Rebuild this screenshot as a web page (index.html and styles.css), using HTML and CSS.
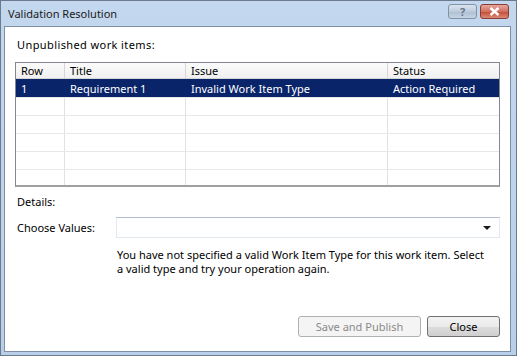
FILE: index.html
```html
<!DOCTYPE html>
<html lang="en">
<head>
    <meta charset="UTF-8">
    <title>Validation Resolution</title>
    <link rel="stylesheet" href="styles.css">
</head>
<body>
    <div class="window">
        <div class="titlebar">
            <span class="title">Validation Resolution</span>
            <div class="caption-buttons">
                <span class="cap-btn help">?</span>
                <span class="cap-btn close">
                    <svg width="11" height="9" viewBox="0 0 11 9"><path d="M1.5 1 L9.5 8 M9.5 1 L1.5 8" stroke="#fff" stroke-width="2.4"/></svg>
                </span>
            </div>
        </div>

        <div class="client">
            <div class="label heading">Unpublished work items:</div>

            <div class="grid">
                <table>
                    <thead>
                        <tr>
                            <th class="col-row">Row</th>
                            <th class="col-title">Title</th>
                            <th class="col-issue">Issue</th>
                            <th>Status</th>
                        </tr>
                    </thead>
                    <tbody>
                        <tr class="selected">
                            <td>1</td>
                            <td>Requirement 1</td>
                            <td>Invalid Work Item Type</td>
                            <td>Action Required</td>
                        </tr>
                        <tr><td></td><td></td><td></td><td></td></tr>
                        <tr><td></td><td></td><td></td><td></td></tr>
                        <tr><td></td><td></td><td></td><td></td></tr>
                        <tr><td></td><td></td><td></td><td></td></tr>
                        <tr><td></td><td></td><td></td><td></td></tr>
                    </tbody>
                </table>
            </div>

            <div class="label details">Details:</div>

            <div class="field-row">
                <label class="field-label">Choose Values:</label>
                <div class="combo"><span class="arrow"></span></div>
            </div>

            <p class="message">You have not specified a valid Work Item Type for this work item. Select a valid type and try your operation again.</p>

            <div class="actions">
                <button class="button" disabled>Save and Publish</button>
                <button class="button close-button">Close</button>
            </div>
        </div>
    </div>
</body>
</html>
```

FILE: styles.css
```css
body {
    margin: 0;
    font-family: "Noto Sans", "Open Sans", sans-serif;
    font-size: 11px;
    color: #000;
}
.window {
    box-sizing: border-box;
    width: 517px;
    height: 356px;
    border: 1px solid #6b7a8c;
    padding: 0 5px 3px 3px;
    background: linear-gradient(#c3d7ee, #b9cfe9);
    display: flex;
    flex-direction: column;
}
.titlebar {
    height: 25px;
    display: flex;
    align-items: flex-start;
    justify-content: space-between;
}
.title {
    margin: 5px 0 0 4px;
    line-height: 16px;
    color: #1a1a1a;
}
.caption-buttons {
    display: flex;
    gap: 3px;
    margin-top: 3px;
    margin-right: 2px;
}
.cap-btn {
    box-sizing: border-box;
    width: 29px;
    height: 15px;
    border: 1px solid #8393a6;
    border-radius: 3px;
    display: flex;
    align-items: center;
    justify-content: center;
}
.cap-btn.help {
    background: linear-gradient(#dbe5f0, #bccbdc 50%, #aebfd3 51%, #c6d4e3);
    color: #66768a;
    font-weight: bold;
    font-size: 11px;
    line-height: 1;
}
.cap-btn.close {
    border-color: #8c3c34;
    background: linear-gradient(#e6a89e, #d0705f 50%, #c44a36 51%, #d98a74);
}
.client {
    flex: 1;
    background: #fff;
    border: 1px solid #7d8fa6;
    padding: 10px 10px 14px 10px;
    display: flex;
    flex-direction: column;
}
.label {
    line-height: 16px;
    padding-left: 2px;
}
.heading {
    letter-spacing: 0.4px;
}
.grid {
    margin-top: 9px;
    height: 122px;
    overflow: hidden;
    border: 1px solid #828790;
    border-bottom: 2px solid #a0a0a0;
}
table {
    width: 100%;
    border-collapse: collapse;
    table-layout: fixed;
}
th, td {
    text-align: left;
    font-weight: normal;
    padding: 0 5px;
    white-space: nowrap;
    border-right: 1px solid #e2e2e2;
}
th:last-child, td:last-child {
    border-right: none;
}
th {
    height: 15px;
    line-height: 15px;
    background: linear-gradient(#fbfbfb, #f0f0f0);
    border-right-color: #d5d5d5;
    border-bottom: 1px solid #d5d5d5;
}
td {
    height: 17px;
    line-height: 17px;
    border-bottom: 1px solid #e8e8e8;
}
.col-row {
    width: 38px;
}
.col-title {
    width: 110px;
}
.col-issue {
    width: 191px;
}
tr.selected td {
    background: #0a246a;
    color: #fff;
    height: 18px;
    border-right-color: #0a246a;
}
.details {
    margin-top: 7px;
}
.field-row {
    display: flex;
    align-items: center;
    margin-top: 7px;
}
.field-label {
    width: 101px;
    padding-left: 2px;
    box-sizing: border-box;
}
.combo {
    flex: 1;
    height: 21px;
    box-sizing: border-box;
    border: 1px solid #e2e8ef;
    border-top-color: #aebdd3;
    position: relative;
}
.arrow {
    position: absolute;
    right: 8px;
    top: 8px;
    border-left: 4px solid transparent;
    border-right: 4px solid transparent;
    border-top: 4px solid #1a1a1a;
}
.message {
    margin: 10px 0 0 102px;
    max-width: 370px;
    line-height: 14px;
}
.actions {
    margin-top: auto;
    display: flex;
    justify-content: flex-end;
    gap: 6px;
}
.button {
    font-family: inherit;
    font-size: 11px;
    height: 21px;
    padding: 0;
    width: 123px;
    border: 1px solid #707070;
    border-radius: 3px;
    background: linear-gradient(#f2f2f2, #ebebeb 50%, #dddddd 51%, #cfcfcf);
    color: #000;
}
.button:disabled {
    border-color: #adb2b5;
    background: #f4f4f4;
    color: #8a8a8a;
}
.close-button {
    width: 73px;
}
```
